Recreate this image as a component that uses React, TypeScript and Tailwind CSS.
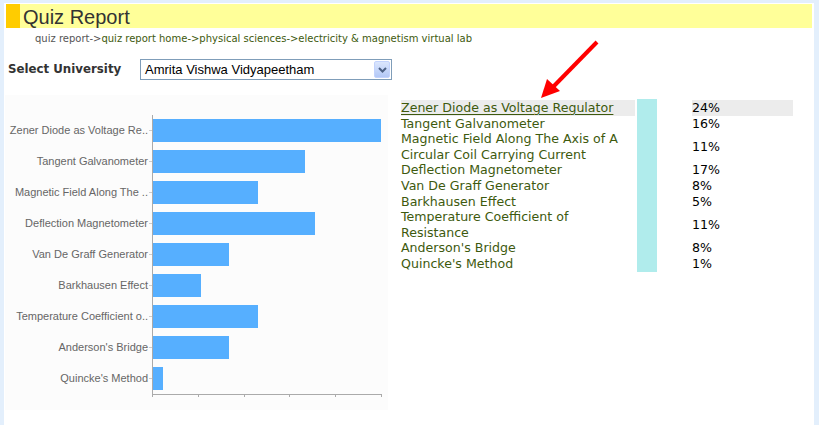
const bars = [
  { label: "Zener Diode as Voltage Re..", pct: 24 },
  { label: "Tangent Galvanometer", pct: 16 },
  { label: "Magnetic Field Along The ..", pct: 11 },
  { label: "Deflection Magnetometer", pct: 17 },
  { label: "Van De Graff Generator", pct: 8 },
  { label: "Barkhausen Effect", pct: 5 },
  { label: "Temperature Coefficient o..", pct: 11 },
  { label: "Anderson's Bridge", pct: 8 },
  { label: "Quincke's Method", pct: 1 },
];

const rows = [
  { name: ["Zener Diode as Voltage Regulator"], pct: "24%" },
  { name: ["Tangent Galvanometer"], pct: "16%" },
  { name: ["Magnetic Field Along The Axis of A", "Circular Coil Carrying Current"], pct: "11%" },
  { name: ["Deflection Magnetometer"], pct: "17%" },
  { name: ["Van De Graff Generator"], pct: "8%" },
  { name: ["Barkhausen Effect"], pct: "5%" },
  { name: ["Temperature Coefficient of", "Resistance"], pct: "11%" },
  { name: ["Anderson's Bridge"], pct: "8%" },
  { name: ["Quincke's Method"], pct: "1%" },
];

const PLOT_W = 228;
const MAX = 24;

function BarChart() {
  return (
    <div className="w-[383px] h-[315px] bg-[#fcfcfc] pt-[20px] font-['Liberation_Sans',Arial,sans-serif]">
      <div className="flex">
        <div className="w-[147px] flex flex-col">
          {bars.map((b) => (
            <div key={b.label} className="h-[31px] flex items-center justify-end gap-[1px]">
              <span className="text-[11px] text-[#666] whitespace-nowrap">{b.label}</span>
              <span className="w-[3px] h-px bg-[#ccc]" />
            </div>
          ))}
        </div>
        <div className="border-l border-[#aaa] border-b w-[230px] relative">
          {bars.map((b) => (
            <div key={b.label} className="h-[31px] py-[4px]">
              <div className="h-[23px] bg-[#56afff]" style={{ width: (b.pct / MAX) * PLOT_W }} />
            </div>
          ))}
          <div className="absolute left-[-1px] top-full flex w-[230px] justify-between">
            {[0, 1, 2, 3, 4, 5].map((i) => (
              <span key={i} className="w-px h-[3px] bg-[#aaa]" />
            ))}
          </div>
        </div>
      </div>
    </div>
  );
}

function ResultTable() {
  return (
    <div className="grid grid-cols-[234px_2px_20px_35px_101px] font-['DejaVu_Sans',Verdana,sans-serif] text-[12.6px] leading-[15.6px] pt-[1px]">
      {rows.map((r, i) => {
        const hl = i === 0;
        return (
          <div key={r.pct + i} className="contents">
            <div
              className={`col-start-1 text-[#3e5a0e] ${hl ? "bg-[#ececec]" : ""}`}
              style={{ gridRow: i + 1 }}
            >
              {r.name.map((l) => (
                <div key={l} className={hl ? "underline underline-offset-2" : ""}>
                  {l}
                </div>
              ))}
            </div>
            <div
              className={`col-start-5 flex items-center text-black ${hl ? "bg-[#ececec]" : ""}`}
              style={{ gridRow: i + 1 }}
            >
              {r.pct}
            </div>
          </div>
        );
      })}
      <div className="col-start-3 row-start-1 row-end-10 bg-[#b0ecec] -mt-[1px]" />
    </div>
  );
}

export default function App() {
  return (
    <div className="w-[819px] h-[425px] bg-[#e3effc] pl-[4px] pt-[3px] pr-[5px] overflow-hidden">
      <div className="bg-white h-[422px] pt-[1px] relative">
        <div className="mx-[2px] h-[24px] bg-[#ffff99] flex items-center">
          <div className="w-[14px] h-full bg-[#ffcc00]" />
          <h1 className="ml-[3px] text-[20px] text-[#333] font-['Liberation_Sans',Arial,sans-serif] leading-none pt-[2px]">
            Quiz Report
          </h1>
        </div>
        <div className="pl-[31px] pt-[5px] text-[10px] font-['DejaVu_Sans',Verdana,sans-serif] text-[#555] leading-[12px]">
          quiz report-&gt;
          <span className="text-[#3e5a0e]">quiz report home-&gt;physical sciences-&gt;electricity &amp; magnetism virtual lab</span>
        </div>
        <div className="flex items-center mt-[14px] pl-[4px]">
          <span className="w-[132px] text-[11.8px] font-bold text-[#333] font-['DejaVu_Sans',Verdana,sans-serif]">
            Select University
          </span>
          <div className="w-[252px] h-[21px] border border-[#7f9db9] flex items-center justify-between pl-[4px] pr-[1px]">
            <span className="text-[13px] text-black font-['Liberation_Sans',Arial,sans-serif]">
              Amrita Vishwa Vidyapeetham
            </span>
            <div className="w-[16px] h-[17px] rounded-[2px] bg-gradient-to-b from-[#dbe6fd] to-[#b3c8f6] border border-[#c3d3fd] flex items-center justify-center">
              <svg width="9" height="6" viewBox="0 0 9 6">
                <path d="M1 1 L4.5 4.5 L8 1" stroke="#4d6185" strokeWidth="2" fill="none" />
              </svg>
            </div>
          </div>
        </div>
        <div className="flex mt-[15px] pl-[1px]">
          <BarChart />
          <div className="ml-[13px] pt-[4px]">
            <ResultTable />
          </div>
        </div>
        <svg className="absolute left-[533px] top-[36px]" width="66" height="64" viewBox="0 0 66 64">
          <line x1="60" y1="3" x2="16" y2="48" stroke="#ff0000" strokeWidth="4" />
          <polygon points="4,59 10,40 23,52" fill="#ff0000" />
        </svg>
      </div>
    </div>
  );
}
